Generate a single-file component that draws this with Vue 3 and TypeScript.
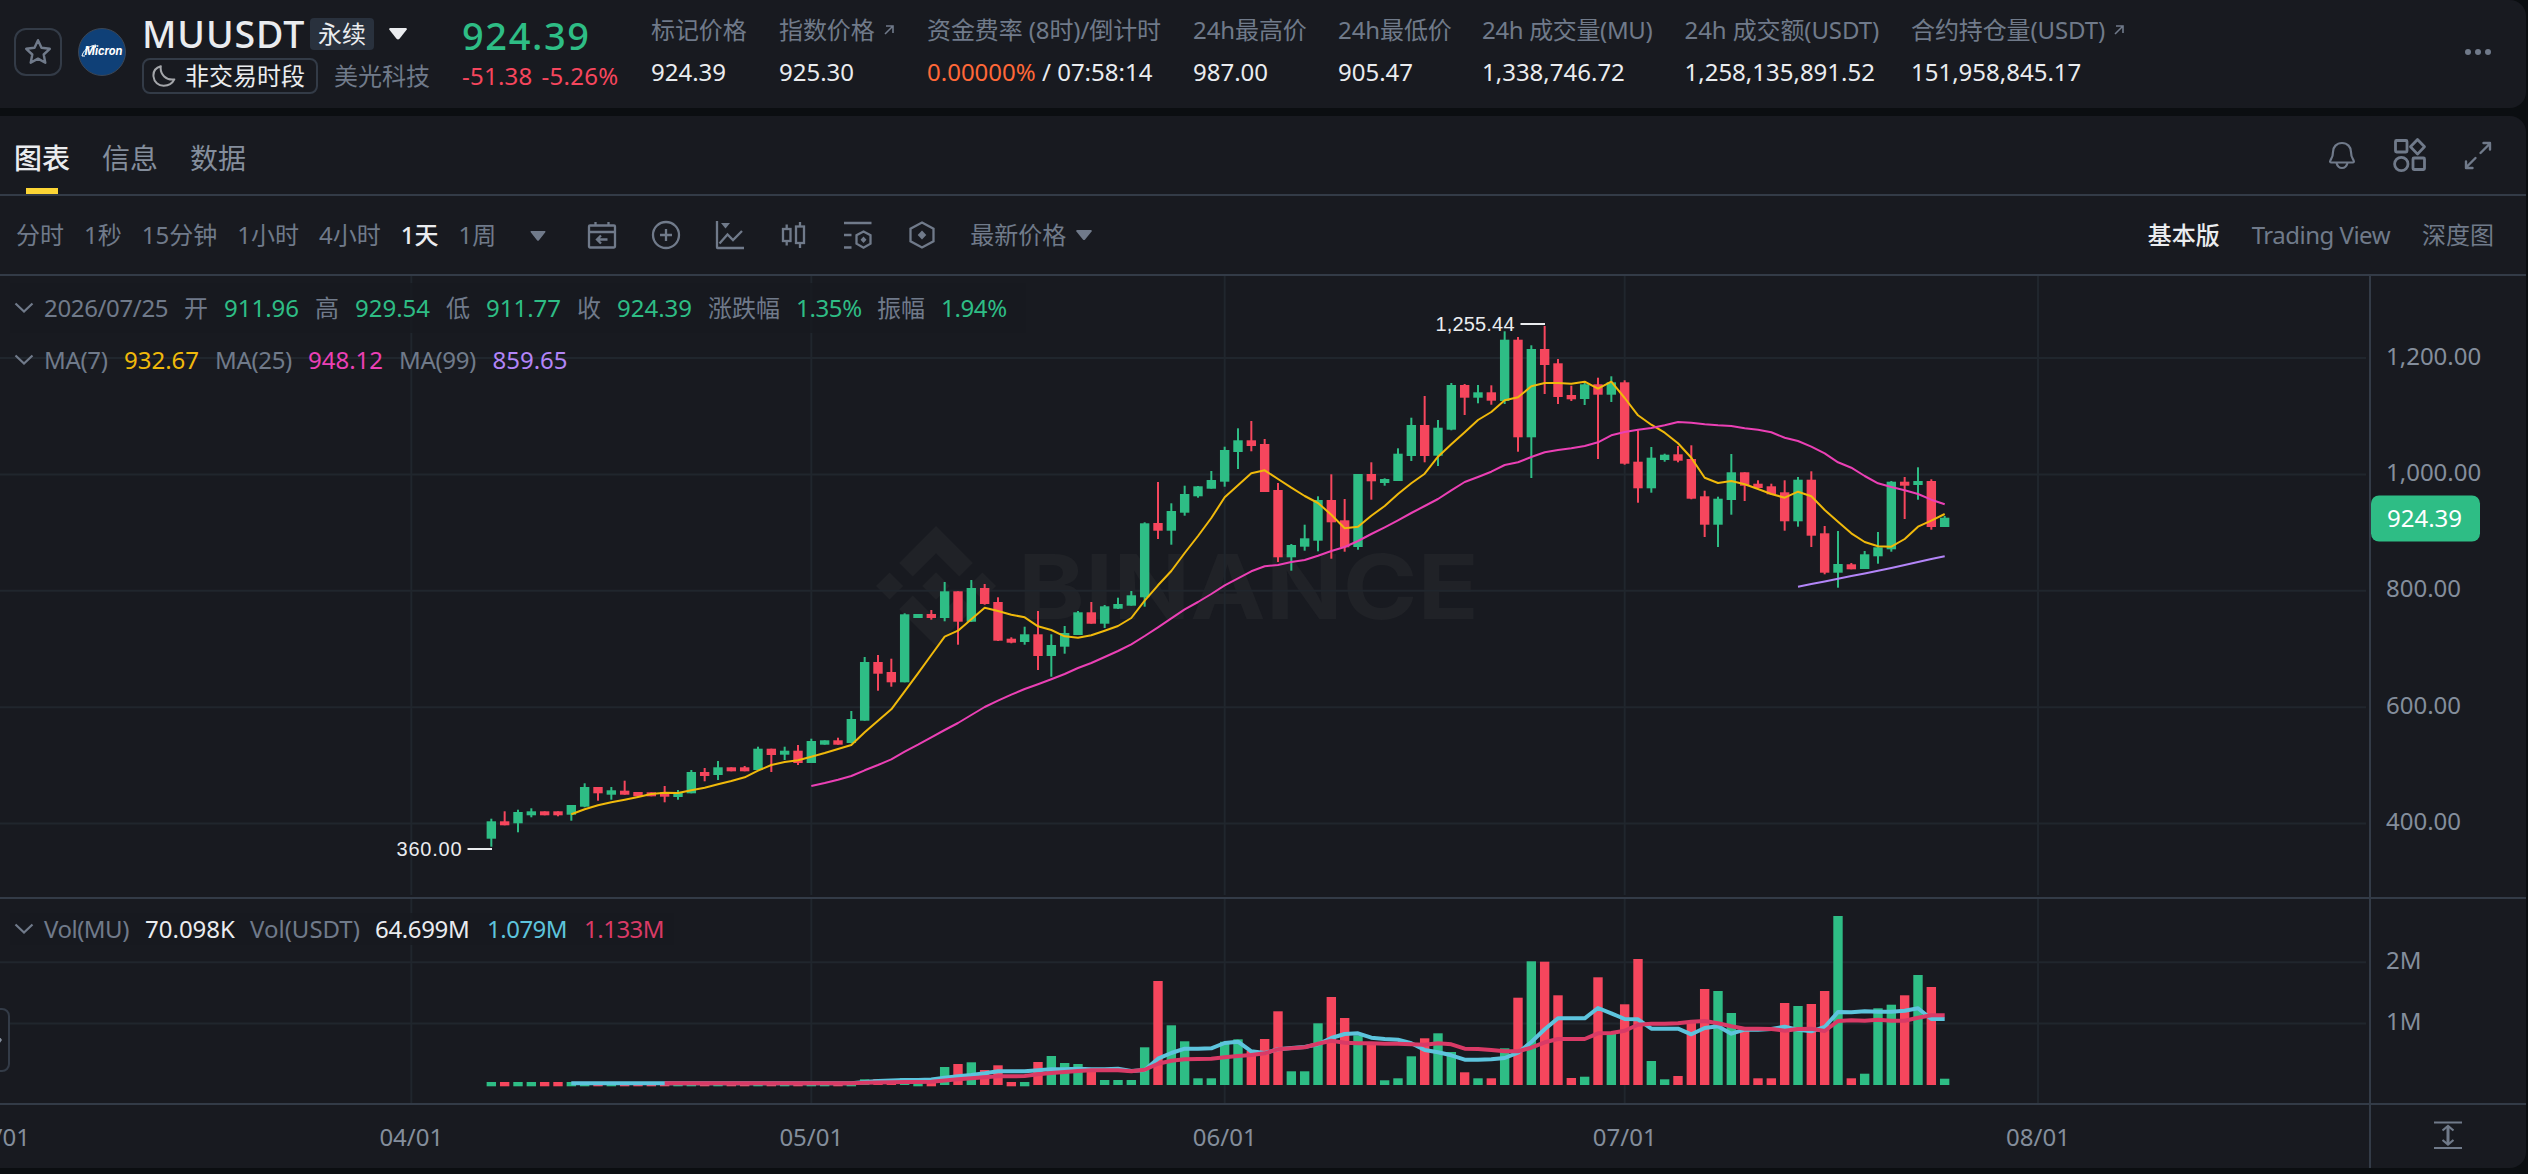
<script setup lang="ts">
type Candle = [number, number, number, number]

const FIRST_X = 491.33
const STEP = 13.3333
const VOLUME_BASE = 186

const xAt = (i: number): number => FIRST_X + i * STEP

/* High, body top, body bottom, low in plot pixels */
const candles: Candle[] = [
  [542.7, 545.3, 562.7, 570.7], [535.3, 545.3, 549.3, 549.3], [533.7, 536, 547.3, 556.3], [532.3, 535.3, 539.3, 541.3],
  [535.3, 535.3, 539.3, 539.3], [535.3, 535.3, 539.3, 540.3], [529, 529, 538.7, 544.7], [507.3, 511, 530.7, 531.3],
  [511, 511, 517.3, 524.7], [511, 514.3, 518.7, 523.7], [504.7, 514.7, 518.7, 518.7], [516, 516, 520.3, 520.3],
  [516.3, 516.3, 520.3, 520.3], [510, 516.3, 520.7, 526.3], [514, 516.3, 521, 523.7], [494, 496, 517.3, 517.3],
  [492, 496, 500, 505.3], [485, 491.3, 499, 504], [491.3, 491.3, 495.3, 495.3], [490, 491.3, 495.3, 495.3],
  [470.7, 472.7, 494, 494], [472.7, 472.7, 479, 496], [470.7, 474.7, 478.7, 484], [469, 474.7, 487, 489],
  [462.7, 465, 487, 487], [464.3, 464.3, 468.7, 468.7], [461.7, 464.3, 468.7, 468.7], [435, 443, 467, 467.3],
  [381, 386, 444.7, 444.7], [379, 386, 397.7, 414.7], [382.7, 396, 406.3, 410.7], [337.3, 338.3, 406.3, 406.3],
  [338, 338, 342, 342], [334, 338, 342, 343.7], [306, 315.3, 342, 345.3], [315.3, 315.3, 345.7, 368.7],
  [304, 312, 345.7, 346], [308, 312, 328, 328.7], [321.3, 326, 364.7, 365], [361.3, 362.7, 366.7, 367.3],
  [350.7, 358.3, 366, 368.7], [335, 358.3, 380, 394], [358.3, 369, 380, 400.7], [350, 357, 370.7, 377.7],
  [335, 336.3, 359, 359], [326, 336.3, 347.7, 347.7], [329, 330.3, 347.7, 352], [321.7, 328, 332.7, 333],
  [315, 319.3, 329.7, 329.7], [246.3, 247.3, 321.3, 330.7], [206, 247, 254.7, 263], [227.3, 235, 254.7, 268.7],
  [209.7, 218, 236.7, 239.7], [210, 210.3, 220.3, 221.7], [195, 204, 212.7, 212.7], [170.7, 174, 205.7, 210.7],
  [152.3, 164.3, 176, 193], [145, 164.3, 170, 175.3], [163, 168, 216, 216], [207, 214, 281.3, 286],
  [268, 269, 281.3, 294.7], [248.7, 262.3, 270.7, 274.7], [220.3, 224, 264.7, 275.3], [198.3, 224, 246.3, 282.7],
  [223, 244.3, 271.3, 275.7], [198, 198, 271, 273.7], [186.3, 198, 205.3, 223.7], [202.3, 203, 207, 209.7],
  [172.3, 177.7, 205, 205], [141.7, 149, 180, 185], [120, 149, 180, 186.3], [144, 151.7, 179.7, 190],
  [107, 109, 153.7, 154.3], [108, 109, 121.7, 139], [109, 116.3, 121.7, 127.3], [109.3, 116.3, 124.7, 128.7],
  [55.3, 63.7, 125, 128], [61, 63.7, 161.3, 175.7], [69.3, 73, 161.3, 202], [50, 73, 89, 118],
  [83, 87.3, 121, 128], [109.7, 119, 123.3, 125], [106.3, 108.3, 123, 129], [101.7, 108.3, 118.7, 183],
  [100.3, 106.3, 118.7, 126], [104.3, 106.3, 187.7, 188.7], [154.3, 185.7, 212.3, 226.7], [171, 181.7, 212.3, 216.7],
  [177.7, 178.7, 184, 185.7], [170, 178.3, 184.7, 186.3], [169.3, 183, 222.7, 223.3], [214.7, 220.3, 248.7, 261],
  [220.7, 222.7, 248.7, 271], [178, 196.3, 224, 238.7], [196.3, 196.3, 209.7, 225], [204.3, 207.7, 212, 212],
  [207.7, 210.3, 218.3, 218.7], [204.3, 216.3, 245.3, 254.7], [201, 203.7, 245.3, 250.7], [195.3, 203.7, 259.7, 271],
  [250, 257.3, 296.7, 298.3], [255, 288, 296.7, 311.7], [287, 288.3, 293.3, 293.3], [275, 278.3, 293, 293],
  [256, 271.3, 280.3, 287.7], [205, 205.7, 273.3, 275.7], [201, 205.7, 209.7, 243], [191.3, 205, 209, 223.7],
  [203.3, 205, 251, 253.7], [240, 241.7, 251, 251],
]

/* Days that closed lower, by index */
const downDays = new Set<number>([
  1, 4, 5, 8, 10, 11, 12, 13, 16, 18, 19, 21, 23, 26, 29, 30, 33, 35, 37, 38, 39, 41, 45, 50, 57, 58, 59, 63, 64, 66,
  70, 73, 75, 77, 79, 80, 81, 83, 85, 86, 89, 90, 91, 94, 95, 96, 97, 99, 100, 102, 106, 108,
])
const dayColor = (i: number): string => (downDays.has(i) ? '#f6465d' : '#2ebd85')

/* Bar heights; 0 is drawn as the minimum stub */
const volumes: number[] = [
  0, 0, 0, 0, 0, 0, 0, 0, 0, 0, 0, 0, 0, 0, 0, 0, 0, 0, 0, 0, 0, 0, 0, 0, 0, 0, 0, 0,
  5.7, 6, 6, 7, 0, 0, 18, 21, 22.7, 15, 19.7, 0, 0, 23, 29, 22, 21, 14, 5, 5, 5, 37.7,
  104, 59.7, 43.7, 6.7, 6.7, 43.3, 45.7, 34, 46, 73.7, 13.7, 13.7, 61.7, 88, 67, 49.7, 40.7, 4.7, 6.7, 28.7,
  46.7, 51.7, 33, 12.7, 6.7, 6.7, 36.7, 87.3, 123.7, 123.3, 89.7, 7, 8.3, 107.7, 51.3, 80.7, 126, 24, 5.7, 9,
  62.7, 96, 94, 72, 55.7, 6.7, 6.7, 82, 79, 81, 94, 169, 6.7, 11.3, 76.7, 80.3, 89.7, 110, 98, 6.3,
]

const ma7: number[] = [
  538.3, 533.3, 529.3, 526.3, 523.7, 521, 518, 516.7, 517, 514.3, 511.7, 508.3, 505, 501.3, 494.7, 489, 486, 484.3,
  480.7, 477, 473, 469, 456.3, 444.7, 433.3, 415.3, 397.3, 379, 360.7, 354.7, 343.3, 331.7, 335, 338.7, 341.3, 350.3,
  354, 360.3, 361.7, 359.3, 354.7, 350, 342, 324.7, 309.3, 295, 277, 260, 242, 221.3, 209.3, 197.3, 194.3, 203,
  211.7, 220, 227, 238.7, 252.3, 250.7, 239.7, 230, 218, 207.3, 197.7, 180.7, 168.3, 156.3, 144, 136, 124.3, 121.3,
  110.3, 107, 107, 107.7, 105.7, 112.7, 105.7, 122, 139.3, 148.7, 156.7, 167.3, 181.7, 201.7, 207, 205, 208.3, 213,
  218, 221.7, 215.7, 220.3, 234, 245.7, 257.3, 266, 270.3, 270.7, 263, 250.7, 244.7, 238,
]
const ma25: number[] = [
  510, 507, 503.7, 500, 494.3, 489, 483.3, 475.7, 468.7, 461.3, 454, 447, 439, 431, 424.7, 418.7, 413, 408.3, 403.3,
  398, 392, 387, 381, 375, 368.3, 360, 351.3, 342.3, 333.3, 326, 318, 309.3, 302.3, 295.3, 290.3, 289, 286, 284,
  279.7, 275, 271, 265, 258, 251.3, 244.3, 237, 230, 223, 214.3, 206, 201, 195.7, 189, 186.3, 181, 176.3, 174, 172.3,
  170, 166.3, 159.3, 156, 153.7, 152, 149.3, 146, 146.7, 148.3, 149.3, 150, 152.3, 153.7, 156.3, 161.7, 165, 170.7,
  177.3, 186.3, 191.7, 200, 207.3, 211, 214.3, 218, 223.7, 228.3,
]
const ma99: number[] = [310.7, 308, 305.4, 302.7, 300, 297.4, 294.7, 292, 289, 286, 283, 280.3]

const volMa7: number[] = [
  ...Array<number>(22).fill(184.3),
  183, 182, 181.5, 181, 181, 180.5, 178.8, 177.3, 176, 174.3, 172.3, 172.3, 172.3, 171.3, 170.3, 170.3, 169.7, 170.3,
  170.3, 169.7, 172, 171, 159.7, 154, 149.7, 149.7, 149.3, 144, 142.7, 152.3, 154, 150.3, 149, 148, 145.3, 139, 135,
  134.3, 138.7, 140, 140.7, 144.3, 151, 153.3, 156.3, 160.7, 160.7, 160.3, 159, 153.7, 143, 130.3, 119.3, 119.3,
  119.3, 109, 114.3, 120, 120.3, 129.7, 129.7, 129.7, 135.3, 129, 127.3, 134.7, 130.7, 130.7, 130, 127.7, 130.7,
  132.3, 128, 113, 113.3, 112.3, 112.7, 112.7, 111.7, 109.3, 120, 120,
]
const volMa14: number[] = [
  ...Array<number>(15).fill(184.3),
  183.8, 183.5, 183.2, 183, 182.9, 182.7, 181.5, 180.3, 179.3, 178.3, 177.3, 177.3, 177, 175.3, 174, 173, 172, 171.3,
  171.3, 171.3, 172.3, 170.7, 164.7, 161.7, 160.3, 160, 159.7, 158.3, 157, 156, 154.3, 150.3, 149.3, 148.3, 144.7,
  141.7, 143.7, 144.3, 144.3, 144.7, 144.7, 145.3, 145.7, 144.3, 145.3, 149.7, 150, 151, 152.3, 152.3, 148.7, 143.3,
  140, 140, 140, 134.3, 134, 131.7, 125.7, 124.7, 124.7, 124.3, 122.7, 122, 124.3, 127.3, 129.7, 129.7, 130, 131.7,
  130, 129.7, 132, 122, 121.3, 121.7, 120.7, 121.7, 121.7, 118.7, 116.3, 116.3,
]

const toPoints = (values: number[], start: number): string =>
  values.map((y, k) => `${xAt(start + k).toFixed(1)},${y}`).join(' ')

const monthLines = [
  { x: -2, label: '03/01' },
  { x: 411.3, label: '04/01' },
  { x: 811.3, label: '05/01' },
  { x: 1224.7, label: '06/01' },
  { x: 1624.7, label: '07/01' },
  { x: 2038, label: '08/01' },
]
const priceLines = [
  { y: 82, label: '1,200.00' },
  { y: 198.4, label: '1,000.00' },
  { y: 314.8, label: '800.00' },
  { y: 431.2, label: '600.00' },
  { y: 547.6, label: '400.00' },
]
const volumeLines = [
  { y: 63.3, label: '2M' },
  { y: 124.6, label: '1M' },
]

const stats = [
  { label: '标记价格', value: '924.39', width: 128 },
  { label: '指数价格', value: '925.30', width: 148, link: true },
  { label: '资金费率 (8时)/倒计时', value: ' / 07:58:14', accent: '0.00000%', width: 266 },
  { label: '24h最高价', value: '987.00', width: 145 },
  { label: '24h最低价', value: '905.47', width: 144 },
  { label: '24h 成交量(MU)', value: '1,338,746.72', width: 202.5, tight: true },
  { label: '24h 成交额(USDT)', value: '1,258,135,891.52', width: 226.5 },
  { label: '合约持仓量(USDT)', value: '151,958,845.17', width: 240, link: true },
]

const tabs = ['图表', '信息', '数据']
const intervals = ['分时', '1秒', '15分钟', '1小时', '4小时', '1天', '1周']
const views = ['基本版', 'Trading View', '深度图']

const ohlc = [
  { text: '2026/07/25', tone: 'muted tight', width: 124 },
  { text: '开', tone: 'muted', width: 24 },
  { text: '911.96', tone: 'up', width: 75 },
  { text: '高', tone: 'muted', width: 24 },
  { text: '929.54', tone: 'up', width: 75 },
  { text: '低', tone: 'muted', width: 24 },
  { text: '911.77', tone: 'up', width: 75 },
  { text: '收', tone: 'muted', width: 24 },
  { text: '924.39', tone: 'up', width: 75 },
  { text: '涨跌幅', tone: 'muted', width: 72 },
  { text: '1.35%', tone: 'up tight', width: 65 },
  { text: '振幅', tone: 'muted', width: 48 },
  { text: '1.94%', tone: 'up tight', width: 66 },
]
const maLegend = [
  { text: 'MA(7)', tone: 'muted tight', width: 64 },
  { text: '932.67', tone: 'yellow', width: 75 },
  { text: 'MA(25)', tone: 'muted tight', width: 77 },
  { text: '948.12', tone: 'pink', width: 75 },
  { text: 'MA(99)', tone: 'muted tight', width: 77.5 },
  { text: '859.65', tone: 'violet', width: 76 },
]
const volLegend = [
  { text: 'Vol(MU)', tone: 'muted tighter', width: 85 },
  { text: '70.098K', tone: 'white', width: 89 },
  { text: 'Vol(USDT)', tone: 'muted', width: 109 },
  { text: '64.699M', tone: 'white tight', width: 96 },
  { text: '1.079M', tone: 'cyan tighter', width: 81 },
  { text: '1.133M', tone: 'crimson tighter', width: 82 },
]
const legends = [
  { key: 'ohlc', items: ohlc },
  { key: 'ma', items: maLegend },
]
</script>

<template>
  <div class="page">
    <header class="ticker">
      <button class="star">
        <svg width="28" height="28" viewBox="0 0 28 28">
          <path d="M14 2.2l3.5 7.6 8.3 1-6.1 5.7 1.6 8.2L14 20.6l-7.3 4.1 1.6-8.2-6.1-5.7 8.3-1z" fill="none" stroke="#707a8a" stroke-width="2.4" stroke-linejoin="round" />
        </svg>
      </button>
      <svg class="logo" width="48" height="48" viewBox="0 0 48 48">
        <circle cx="24" cy="24" r="23.5" fill="#0f4077" stroke="#3c4654" />
        <path d="M4 28c1-5 6-10 14-11M4 28h3M18 17l-1 3" fill="none" stroke="#fff" stroke-width="1" />
        <text x="6.500" y="27" class="logo-text" textLength="38" lengthAdjust="spacingAndGlyphs">Micron</text>
      </svg>
      <div class="name-block">
        <div class="name-row">
          <span class="symbol">MUUSDT</span>
          <span class="tag">永续</span>
          <svg class="caret" width="18" height="12" viewBox="0 0 18 12"><path d="M1 0h16q1.500 .5 .6 1.800L10.500 10.800q-1.500 1.200-3 0L.4 1.800Q-.3.5 1 0z" fill="#eaecef" /></svg>
        </div>
        <div class="name-row second">
          <span class="session">
            <svg width="24" height="24" viewBox="0 0 24 24"><path d="M8.800 2.200C3.800 3.600 1 7.500 1.500 12.500c.5 5.500 5 9.300 10.300 9.200 5-.1 8.800-2.600 10.500-6.300C14.500 16.600 7.600 10.600 8.800 2.200z" fill="none" stroke="#a4a6aa" stroke-width="2" stroke-linejoin="round" /></svg>
            非交易时段
          </span>
          <span class="company">美光科技</span>
        </div>
      </div>
      <div class="price-block">
        <div class="last-price">924.39</div>
        <div class="change"><span>-51.38</span><span>-5.26%</span></div>
      </div>
      <div class="stats">
        <div v-for="s in stats" :key="s.label" class="stat" :style="{ width: s.width + 'px' }">
          <div class="stat-label" :class="{ tight: s.tight }">
            {{ s.label }}
            <svg v-if="s.link" width="10" height="10" viewBox="0 0 10 10"><path d="M2 1h7v7M9 1L1 9" fill="none" stroke="#707a8a" stroke-width="1.600" /></svg>
          </div>
          <div class="stat-value"><span v-if="s.accent" class="accent">{{ s.accent }}</span>{{ s.value }}</div>
        </div>
      </div>
      <svg class="more" width="32" height="32" viewBox="0 0 32 32" fill="#707a8a">
        <circle cx="6" cy="16" r="3" /><circle cx="16" cy="16" r="3" /><circle cx="26" cy="16" r="3" />
      </svg>
    </header>

    <main class="panel">
      <nav class="tabs">
        <span v-for="(t, i) in tabs" :key="t" class="tab" :class="{ active: i === 0 }">{{ t }}</span>
        <div class="tab-icons">
          <svg width="32" height="32" viewBox="0 0 32 32" fill="none" stroke="#707a8a" stroke-width="2.200" stroke-linejoin="round">
            <path d="M16 4C10.500 4 7 8 7 13c0 5-1.500 6.500-2.500 8.200C3.700 22.600 4 23.500 5.500 23.500h21c1.500 0 1.800-.9 1-2.300C26.500 19.500 25 18 25 13c0-5-3.500-9-9-9z" />
            <path d="M10.500 24c.8 3 2.800 5 5.500 5s4.700-2 5.500-5" />
          </svg>
          <svg width="36" height="36" viewBox="0 0 36 36" fill="none" stroke="#707a8a" stroke-width="2.800" stroke-linejoin="round">
            <rect x="3.500" y="3.500" width="11.500" height="11.500" rx="1" />
            <path d="M25.500 2.500l7 7.300-7 7.300-7-7.300z" />
            <circle cx="9.300" cy="27" r="6.700" />
            <rect x="21" y="21" width="11.500" height="11.500" rx="1" />
          </svg>
          <svg width="32" height="32" viewBox="0 0 32 32" fill="none" stroke="#707a8a" stroke-width="2.400" stroke-linecap="round" stroke-linejoin="round">
            <path d="M18.500 14L28 4.500M21.500 4H28v6.500M13.500 19L4 28.500M4 22.500V29h6.500" />
          </svg>
        </div>
      </nav>

      <div class="toolbar">
        <span v-for="t in intervals" :key="t" class="interval" :class="{ active: t === '1天' }">{{ t }}</span>
        <svg class="tool first" width="32" height="32" viewBox="0 0 32 32"><path d="M9.500 12h13q1.600 0 .8 1.300l-6.300 8q-1 1-2 0l-6.300-8q-.8-1.300.8-1.300z" fill="#707a8a" /></svg>
        <svg class="tool" width="32" height="32" viewBox="0 0 32 32">
          <rect x="3" y="6.500" width="26" height="22" rx="1" /><path d="M3 13h26M9.500 3v4M22.500 3v4M21.500 20.500H11.500M15 16.500l-4 4 4 4" />
        </svg>
        <svg class="tool" width="32" height="32" viewBox="0 0 32 32"><circle cx="16" cy="16" r="13" /><path d="M16 10v12M10 16h12" /></svg>
        <svg class="tool" width="32" height="32" viewBox="0 0 32 32">
          <path d="M3 2v26.500q0 .5.500.5H30M5.500 24.500l8-9 5.500 5.500L28 12" /><path d="M7 4h9l-4.500 5.500z" fill="#707a8a" stroke="none" />
        </svg>
        <svg class="tool" width="32" height="32" viewBox="0 0 32 32">
          <rect x="5" y="10" width="7.500" height="12" /><path d="M8.700 5.500V10M8.700 22v4.500M22 3v4.500M22 24v5" /><rect x="18" y="7.500" width="8" height="16.500" />
        </svg>
        <svg class="tool" width="32" height="32" viewBox="0 0 32 32">
          <path d="M2 4h27.500M2 16h7.500M2 28.500h7.500" /><path d="M21.500 12.500l7 3.700v8.500l-7 4-7-4v-8.500z" /><path d="M21.500 17.500l3 3.200-3 3.200-3-3.200z" fill="#707a8a" stroke="none" />
        </svg>
        <svg class="tool" width="32" height="32" viewBox="0 0 32 32">
          <path d="M16 3.500l11.500 6.200v12.600L16 28.500 4.500 22.300V9.700z" /><path d="M16 11.500l4.300 4.500-4.300 4.500-4.300-4.500z" fill="#707a8a" stroke="none" />
        </svg>
        <span class="price-kind">最新价格</span>
        <svg width="18" height="12" viewBox="0 0 18 12"><path d="M2 1h14q1.300.2.600 1.500l-6.500 8q-1.100 1-2.200 0l-6.500-8Q.7 1.200 2 1z" fill="#707a8a" /></svg>
        <div class="views">
          <span v-for="(v, i) in views" :key="v" :class="{ active: i === 0, tighter: i === 1 }">{{ v }}</span>
        </div>
      </div>

      <section class="chart">
        <div class="pane main-pane">
          <svg width="2369" height="621" viewBox="0 0 2369 621">
            <g fill="#202227">
              <path transform="translate(876 250) scale(.948)" d="M38.730 53.200L63.310 28.620 87.900 53.210 102.200 38.910 63.310 0 24.430 38.900zM0 63.310L14.300 49 28.600 63.300 14.300 77.610zM38.730 73.410L63.310 97.990 87.900 73.400 102.210 87.690 63.310 126.610 24.430 87.700zM98 63.310L112.300 49.010 126.610 63.310 112.300 77.610zM77.830 63.300L63.320 48.780 48.810 63.290 63.320 77.790z" />
              <text class="watermark" x="1018" y="343" textLength="461" lengthAdjust="spacingAndGlyphs">BINANCE</text>
            </g>
            <g class="grid">
              <line v-for="m in monthLines" :key="m.label" :x1="m.x" :x2="m.x" y1="0" y2="619" />
              <line v-for="p in priceLines" :key="p.label" x1="0" x2="2366" :y1="p.y" :y2="p.y" />
            </g>
            <rect x="10" y="7" width="1016" height="50" fill="#181a20" opacity=".85" />
            <g v-for="(c, i) in candles" :key="i" :fill="dayColor(i)">
              <rect :x="xAt(i) - 1" :y="c[0]" width="2" :height="c[3] - c[0]" />
              <rect :x="xAt(i) - 4.7" :y="c[1]" width="9.400" :height="c[2] - c[1]" />
            </g>
            <g fill="none" stroke-width="2" stroke-linejoin="round">
              <polyline :points="toPoints(ma7, 6)" stroke="#f0b90b" />
              <polyline :points="toPoints(ma25, 24)" stroke="#eb40b5" />
              <polyline :points="toPoints(ma99, 98)" stroke="#b385f8" />
            </g>
            <g class="extreme">
              <text x="1435.500" y="55" textLength="79">1,255.44</text>
              <path d="M1520.500 48h24.500" />
              <text x="396.500" y="579.500" textLength="65">360.00</text>
              <path d="M467.500 573h24.500" />
            </g>
          </svg>
          <div class="legends">
            <div v-for="row in legends" :key="row.key" class="legend">
              <svg width="20" height="12" viewBox="0 0 20 12"><path d="M1.500 1.500l8.500 8 8.500-8" fill="none" stroke="#707a8a" stroke-width="2.200" /></svg>
              <span v-for="(item, i) in row.items" :key="i" :class="item.tone" :style="{ width: item.width + 'px' }">{{ item.text }}</span>
            </div>
          </div>
        </div>
        <div class="axis main-axis">
          <svg width="155" height="621" viewBox="0 0 155 621">
            <text v-for="p in priceLines" :key="p.label" x="15" :y="p.y + 6.500">{{ p.label }}</text>
            <rect x="0" y="219.500" width="109" height="46" rx="8" fill="#2ebd85" />
            <text x="16" y="251" class="current">924.39</text>
          </svg>
        </div>

        <div class="pane vol-pane">
          <svg width="2369" height="204" viewBox="0 0 2369 204">
            <g class="grid">
              <line v-for="m in monthLines" :key="m.label" :x1="m.x" :x2="m.x" y1="0" y2="204" />
              <line v-for="v in volumeLines" :key="v.label" x1="0" x2="2366" :y1="v.y" :y2="v.y" />
            </g>
            <rect x="10" y="14" width="664" height="32" fill="#181a20" opacity=".85" />
            <rect
              v-for="(v, i) in volumes"
              :key="i"
              :x="xAt(i) - 4.7"
              :y="v ? VOLUME_BASE - v : 183"
              width="9.400"
              :height="v || 4.3"
              :fill="dayColor(i)"
            />
            <g fill="none" stroke-width="4" stroke-linejoin="round">
              <polyline :points="toPoints(volMa7, 6)" stroke="#5dc4dd" />
              <polyline :points="toPoints(volMa14, 13)" stroke="#d93a66" />
            </g>
          </svg>
          <div class="legends vol-legends">
            <div class="legend">
              <svg width="20" height="12" viewBox="0 0 20 12"><path d="M1.500 1.500l8.500 8 8.500-8" fill="none" stroke="#707a8a" stroke-width="2.200" /></svg>
              <span v-for="(item, i) in volLegend" :key="i" :class="item.tone" :style="{ width: item.width + 'px' }">{{ item.text }}</span>
            </div>
          </div>
          <div class="handle">
            <svg width="4" height="8" viewBox="0 0 4 8"><path d="M0 0l3 4-3 4z" fill="#848e9c" /></svg>
          </div>
        </div>
        <div class="axis vol-axis">
          <svg width="155" height="204" viewBox="0 0 155 204">
            <text v-for="v in volumeLines" :key="v.label" x="15" :y="v.y + 6.500">{{ v.label }}</text>
          </svg>
        </div>

        <div class="time-axis">
          <svg width="2369" height="63" viewBox="0 0 2369 63">
            <text v-for="m in monthLines" :key="m.label" :x="m.x" y="41" text-anchor="middle">{{ m.label }}</text>
          </svg>
        </div>
        <div class="axis corner">
          <svg width="32" height="32" viewBox="0 0 32 32" fill="none" stroke="#707a8a" stroke-width="2.200">
            <path d="M2 3.500h28M2 29h28" /><path d="M16 7v18" stroke-width="3" /><path d="M10.500 11.500L16 7l5.500 4.500M10.500 21l5.500 4.500 5.500-4.500" />
          </svg>
        </div>
      </section>
    </main>
  </div>
</template>

<style>
body {
  background: #0b0e11;
  overflow: hidden;
}
</style>

<style scoped>
.page {
  width: 2528px;
  height: 1174px;
  box-sizing: border-box;
  padding-right: 2px;
  overflow: hidden;
  display: flex;
  flex-direction: column;
  gap: 8px;
  background: #0b0e11;
  color: #eaecef;
  font-family: 'Noto Sans', 'Noto Sans CJK SC', sans-serif;
  font-size: 24px;
  line-height: 32px;
  white-space: nowrap;
}
svg {
  display: block;
  flex: none;
}
.ticker {
  height: 108px;
  flex: none;
  box-sizing: border-box;
  padding: 0 32px 0 14px;
  display: flex;
  align-items: flex-start;
  background: #181a20;
  border-radius: 0 16px 16px 0;
}
.star {
  width: 48px;
  height: 48px;
  box-sizing: border-box;
  margin: 28px 16px 0 0;
  padding: 0;
  display: flex;
  align-items: center;
  justify-content: center;
  background: none;
  border: 2px solid #333b47;
  border-radius: 12px;
}
.logo {
  margin: 28px 16px 0 0;
}
.logo-text {
  font: italic 700 12px 'Inter', sans-serif;
  fill: #fff;
}
.name-block {
  width: 320px;
  flex: none;
  padding-top: 18px;
}
.name-row {
  height: 32px;
  display: flex;
  align-items: center;
}
.symbol {
  width: 168px;
  flex: none;
  font-size: 37.5px;
  font-weight: 500;
  letter-spacing: 0.9px;
}
.tag {
  width: 64px;
  height: 32px;
  border-radius: 4px;
  background: #29313d;
  text-align: center;
  line-height: 31px;
}
.caret {
  margin-left: 15px;
}
.name-row.second {
  height: 36px;
  margin-top: 8px;
}
.session {
  width: 176px;
  flex: none;
  height: 36px;
  box-sizing: border-box;
  padding-left: 8px;
  display: flex;
  align-items: center;
  gap: 9px;
  border: 2px solid #333b47;
  border-radius: 8px;
}
.company {
  margin-left: 16px;
  color: #707a8a;
}
.price-block {
  width: 189px;
  flex: none;
  padding-top: 18px;
}
.last-price {
  height: 34px;
  line-height: 34px;
  font-size: 38px;
  font-weight: 500;
  letter-spacing: 1.6px;
  color: #2ebd85;
}
.change {
  display: flex;
  gap: 9px;
  margin-top: 8px;
  letter-spacing: 0.25px;
  color: #f6465d;
}
.stats {
  display: flex;
  flex: 1;
}
.stat {
  flex: none;
}
.stat-label {
  margin-top: 14px;
  display: flex;
  align-items: center;
  gap: 9px;
  letter-spacing: -0.1px;
  color: #707a8a;
}
.stat-value {
  margin-top: 10px;
  white-space: pre;
}
.tight {
  letter-spacing: -0.35px;
}
.tighter {
  letter-spacing: -0.5px;
}
.accent {
  color: #ff6838;
}
.more {
  margin-top: 36px;
}
.panel {
  height: 1052px;
  flex: none;
  background: #181a20;
  border-radius: 0 16px 16px 0;
  overflow: hidden;
}
.tabs {
  height: 80px;
  box-sizing: border-box;
  padding: 0 32px 0 14px;
  display: flex;
  gap: 32px;
  border-bottom: 2px solid #333b47;
}
.tab {
  position: relative;
  font-size: 28px;
  line-height: 84px;
  color: #848e9c;
}
.tab.active {
  color: #eaecef;
  font-weight: 500;
}
.tab.active::after {
  content: '';
  position: absolute;
  left: 12px;
  bottom: 0;
  width: 32px;
  height: 6px;
  background: #fcd535;
}
.tab-icons {
  margin-left: auto;
  display: flex;
  align-items: center;
  gap: 34px;
}
.toolbar {
  height: 80px;
  box-sizing: border-box;
  padding: 0 32px 0 16px;
  display: flex;
  align-items: center;
  border-bottom: 2px solid #333b47;
  color: #707a8a;
}
.interval {
  margin-right: 20px;
}
.active {
  color: #eaecef;
  font-weight: 500;
}
.tool {
  margin-right: 32px;
  fill: none;
  stroke: #707a8a;
  stroke-width: 2.3;
}
.tool.first {
  margin-left: 6px;
  stroke: none;
}
.price-kind {
  margin: 0 9px 0 0;
}
.views {
  margin-left: auto;
  display: flex;
  gap: 32px;
}
.chart {
  display: grid;
  grid-template-columns: 2369px 157px;
  grid-template-rows: 623px 206px 63px;
}
.pane {
  position: relative;
  border-bottom: 2px solid #333b47;
}
.grid {
  stroke: #20262d;
  stroke-width: 2;
}
.watermark {
  font: 700 90px 'Inter', sans-serif;
}
.extreme {
  font: 20px 'Liberation Sans', sans-serif;
  fill: #eaecef;
  stroke: none;
}
.extreme path {
  stroke: #eaecef;
  stroke-width: 2;
}
.legends {
  position: absolute;
  left: 14px;
  top: 6px;
}
.legend {
  height: 52px;
  display: flex;
  align-items: center;
  gap: 16px;
}
.legend > svg {
  margin-right: -6px;
}
.vol-legends {
  top: 4px;
}
.muted {
  color: #707a8a;
}
.up {
  color: #2ebd85;
}
.yellow {
  color: #f0b90b;
}
.pink {
  color: #eb40b5;
}
.violet {
  color: #b385f8;
}
.white {
  color: #eaecef;
}
.cyan {
  color: #5dc4dd;
}
.crimson {
  color: #d93a66;
}
.axis {
  border-left: 2px solid #333b47;
}
.main-axis,
.vol-axis {
  border-bottom: 2px solid #333b47;
}
.axis text,
.time-axis text {
  fill: #848e9c;
}
.axis text.current {
  fill: #fff;
}
.handle {
  position: absolute;
  left: -14px;
  top: 109px;
  width: 20px;
  height: 60px;
  display: flex;
  align-items: center;
  justify-content: center;
  background: #181a20;
  border: 2px solid #333b47;
  border-radius: 8px;
}
.handle svg {
  margin-left: 6px;
}
.corner {
  display: flex;
  padding: 14px 0 0 61px;
}
</style>
